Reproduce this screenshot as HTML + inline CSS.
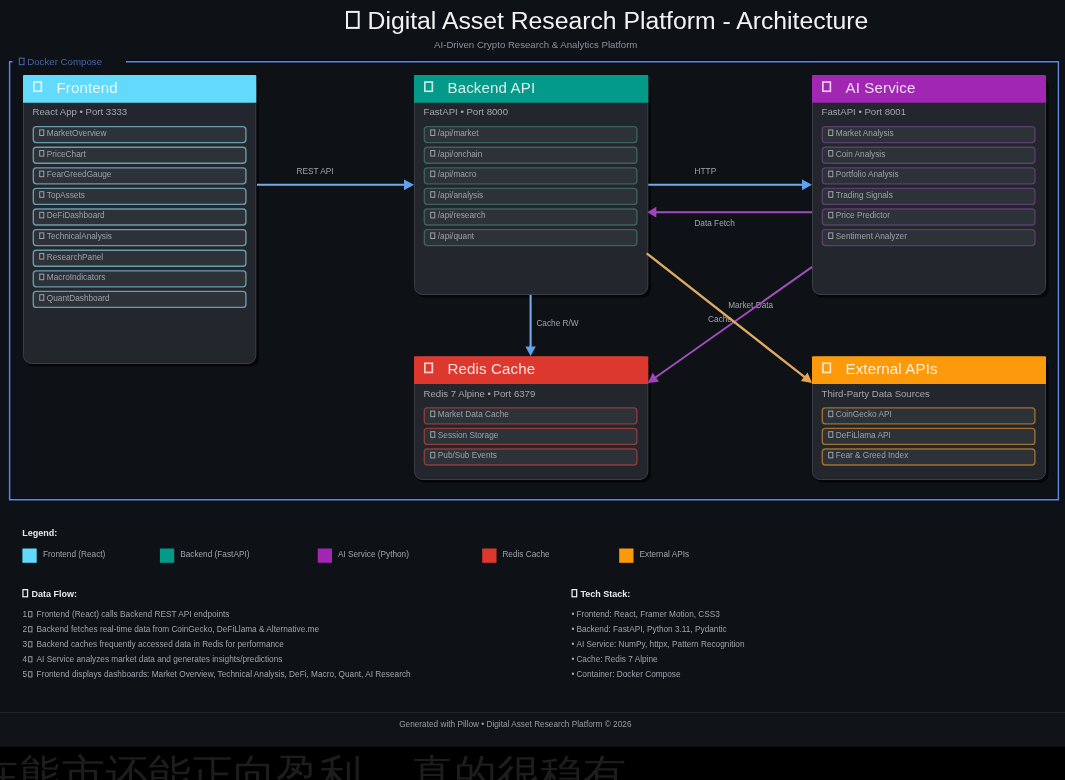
<!DOCTYPE html>
<html><head><meta charset="utf-8"><title>Digital Asset Research Platform - Architecture</title>
<style>
html,body{margin:0;padding:0;background:#0e1116;overflow:hidden;}
body{width:1065px;height:780px;position:relative;font-family:"Liberation Sans", sans-serif;}
svg{position:absolute;left:0;top:0;display:block;font-family:"Liberation Sans", sans-serif;will-change:transform;}
.sub{position:absolute;left:-24.3px;top:753.6px;white-space:nowrap;font-size:43.3px;line-height:1;color:#1d1d1d;font-weight:500;letter-spacing:-0.1px;will-change:transform;}
</style></head>
<body>
<svg width="1065" height="780" viewBox="0 0 1065 780">
<rect x="0" y="0" width="1065" height="780" fill="#0e1116"/>
<rect x="347.00" y="11.90" width="11.70" height="16.00" fill="none" stroke="#f2f2f2" stroke-width="2.0"/>
<text x="367.6" y="29" font-size="24.75" fill="#f2f2f2">Digital Asset Research Platform - Architecture</text>
<text x="434.1" y="48.2" font-size="9.65" fill="#8b9099">AI-Driven Crypto Research &amp; Analytics Platform</text>
<path d="M 12.5 61.8 L 9.6 61.8 L 9.6 499.8 L 1058.4 499.8 L 1058.4 61.8 L 126 61.8" fill="none" stroke="#050c22" stroke-width="3.6"/>
<path d="M 12.5 61.8 L 9.6 61.8 L 9.6 499.8 L 1058.4 499.8 L 1058.4 61.8 L 126 61.8" fill="none" stroke="#5f8ad2" stroke-width="1.5"/>
<rect x="19.35" y="58.15" width="4.70" height="6.50" fill="none" stroke="#4166aa" stroke-width="1.1"/>
<text x="27.2" y="64.8" font-size="9.7" fill="#4166aa">Docker Compose</text>
<rect x="25.5" y="77.5" width="233.3" height="289" rx="8" fill="#050608"/>
<rect x="23.5" y="75.5" width="232.3" height="288" rx="8" fill="#23262d" stroke="#3b3e45" stroke-width="1"/>
<path d="M 23 102.7 L 23 76 Q 23 75 24 75 L 255.3 75 Q 256.3 75 256.3 76 L 256.3 102.7 Z" fill="#61dafb"/>
<rect x="33.85" y="82.05" width="7.50" height="9.20" fill="none" stroke="#d9f6fe" stroke-width="1.7"/>
<text x="56.5" y="93" font-size="15.1" fill="#e6f9fe" letter-spacing="0.12">Frontend</text>
<text x="32.6" y="115.3" font-size="9.6" fill="#a3a7ae">React App • Port 3333</text>
<rect x="33.3" y="126.60" width="212.6" height="16" rx="3" fill="#2d3138" stroke="#6a9cab" stroke-width="1.35"/>
<rect x="39.70" y="129.90" width="4.10" height="5.60" fill="none" stroke="#9ea2a9" stroke-width="1.0"/>
<text x="46.8" y="135.9" font-size="8.25" fill="#9ea2a9">MarketOverview</text>
<rect x="33.3" y="147.20" width="212.6" height="16" rx="3" fill="#2d3138" stroke="#6a9cab" stroke-width="1.35"/>
<rect x="39.70" y="150.50" width="4.10" height="5.60" fill="none" stroke="#9ea2a9" stroke-width="1.0"/>
<text x="46.8" y="156.5" font-size="8.25" fill="#9ea2a9">PriceChart</text>
<rect x="33.3" y="167.80" width="212.6" height="16" rx="3" fill="#2d3138" stroke="#6a9cab" stroke-width="1.35"/>
<rect x="39.70" y="171.10" width="4.10" height="5.60" fill="none" stroke="#9ea2a9" stroke-width="1.0"/>
<text x="46.8" y="177.1" font-size="8.25" fill="#9ea2a9">FearGreedGauge</text>
<rect x="33.3" y="188.40" width="212.6" height="16" rx="3" fill="#2d3138" stroke="#6a9cab" stroke-width="1.35"/>
<rect x="39.70" y="191.70" width="4.10" height="5.60" fill="none" stroke="#9ea2a9" stroke-width="1.0"/>
<text x="46.8" y="197.7" font-size="8.25" fill="#9ea2a9">TopAssets</text>
<rect x="33.3" y="209.00" width="212.6" height="16" rx="3" fill="#2d3138" stroke="#6a9cab" stroke-width="1.35"/>
<rect x="39.70" y="212.30" width="4.10" height="5.60" fill="none" stroke="#9ea2a9" stroke-width="1.0"/>
<text x="46.8" y="218.29999999999998" font-size="8.25" fill="#9ea2a9">DeFiDashboard</text>
<rect x="33.3" y="229.60" width="212.6" height="16" rx="3" fill="#2d3138" stroke="#6a9cab" stroke-width="1.35"/>
<rect x="39.70" y="232.90" width="4.10" height="5.60" fill="none" stroke="#9ea2a9" stroke-width="1.0"/>
<text x="46.8" y="238.89999999999998" font-size="8.25" fill="#9ea2a9">TechnicalAnalysis</text>
<rect x="33.3" y="250.20" width="212.6" height="16" rx="3" fill="#2d3138" stroke="#6a9cab" stroke-width="1.35"/>
<rect x="39.70" y="253.50" width="4.10" height="5.60" fill="none" stroke="#9ea2a9" stroke-width="1.0"/>
<text x="46.8" y="259.49999999999994" font-size="8.25" fill="#9ea2a9">ResearchPanel</text>
<rect x="33.3" y="270.80" width="212.6" height="16" rx="3" fill="#2d3138" stroke="#6a9cab" stroke-width="1.35"/>
<rect x="39.70" y="274.10" width="4.10" height="5.60" fill="none" stroke="#9ea2a9" stroke-width="1.0"/>
<text x="46.8" y="280.09999999999997" font-size="8.25" fill="#9ea2a9">MacroIndicators</text>
<rect x="33.3" y="291.40" width="212.6" height="16" rx="3" fill="#2d3138" stroke="#6a9cab" stroke-width="1.35"/>
<rect x="39.70" y="294.70" width="4.10" height="5.60" fill="none" stroke="#9ea2a9" stroke-width="1.0"/>
<text x="46.8" y="300.7" font-size="8.25" fill="#9ea2a9">QuantDashboard</text>
<rect x="416.5" y="77.5" width="234.29999999999995" height="220" rx="8" fill="#050608"/>
<rect x="414.5" y="75.5" width="233.29999999999995" height="219" rx="8" fill="#23262d" stroke="#3b3e45" stroke-width="1"/>
<path d="M 414 102.7 L 414 76 Q 414 75 415 75 L 647.3 75 Q 648.3 75 648.3 76 L 648.3 102.7 Z" fill="#049a89"/>
<rect x="424.85" y="82.05" width="7.50" height="9.20" fill="none" stroke="#c3e7e3" stroke-width="1.7"/>
<text x="447.5" y="93" font-size="15.1" fill="#d7efec" letter-spacing="0.12">Backend API</text>
<text x="423.6" y="115.3" font-size="9.6" fill="#a3a7ae">FastAPI • Port 8000</text>
<rect x="424.3" y="126.60" width="212.6" height="16" rx="3" fill="#2d3138" stroke="#3c625f" stroke-width="1.35"/>
<rect x="430.70" y="129.90" width="4.10" height="5.60" fill="none" stroke="#9ea2a9" stroke-width="1.0"/>
<text x="437.8" y="135.9" font-size="8.25" fill="#9ea2a9">/api/market</text>
<rect x="424.3" y="147.20" width="212.6" height="16" rx="3" fill="#2d3138" stroke="#3c625f" stroke-width="1.35"/>
<rect x="430.70" y="150.50" width="4.10" height="5.60" fill="none" stroke="#9ea2a9" stroke-width="1.0"/>
<text x="437.8" y="156.5" font-size="8.25" fill="#9ea2a9">/api/onchain</text>
<rect x="424.3" y="167.80" width="212.6" height="16" rx="3" fill="#2d3138" stroke="#3c625f" stroke-width="1.35"/>
<rect x="430.70" y="171.10" width="4.10" height="5.60" fill="none" stroke="#9ea2a9" stroke-width="1.0"/>
<text x="437.8" y="177.1" font-size="8.25" fill="#9ea2a9">/api/macro</text>
<rect x="424.3" y="188.40" width="212.6" height="16" rx="3" fill="#2d3138" stroke="#3c625f" stroke-width="1.35"/>
<rect x="430.70" y="191.70" width="4.10" height="5.60" fill="none" stroke="#9ea2a9" stroke-width="1.0"/>
<text x="437.8" y="197.7" font-size="8.25" fill="#9ea2a9">/api/analysis</text>
<rect x="424.3" y="209.00" width="212.6" height="16" rx="3" fill="#2d3138" stroke="#3c625f" stroke-width="1.35"/>
<rect x="430.70" y="212.30" width="4.10" height="5.60" fill="none" stroke="#9ea2a9" stroke-width="1.0"/>
<text x="437.8" y="218.29999999999998" font-size="8.25" fill="#9ea2a9">/api/research</text>
<rect x="424.3" y="229.60" width="212.6" height="16" rx="3" fill="#2d3138" stroke="#3c625f" stroke-width="1.35"/>
<rect x="430.70" y="232.90" width="4.10" height="5.60" fill="none" stroke="#9ea2a9" stroke-width="1.0"/>
<text x="437.8" y="238.89999999999998" font-size="8.25" fill="#9ea2a9">/api/quant</text>
<rect x="814.5" y="77.5" width="234" height="220" rx="8" fill="#050608"/>
<rect x="812.5" y="75.5" width="233" height="219" rx="8" fill="#23262d" stroke="#3b3e45" stroke-width="1"/>
<path d="M 812 102.7 L 812 76 Q 812 75 813 75 L 1045 75 Q 1046 75 1046 76 L 1046 102.7 Z" fill="#a126b4"/>
<rect x="822.85" y="82.05" width="7.50" height="9.20" fill="none" stroke="#e8cbed" stroke-width="1.7"/>
<text x="845.5" y="93" font-size="15.1" fill="#f0dcf3" letter-spacing="0.12">AI Service</text>
<text x="821.6" y="115.3" font-size="9.6" fill="#a3a7ae">FastAPI • Port 8001</text>
<rect x="822.3" y="126.60" width="212.6" height="16" rx="3" fill="#2d3138" stroke="#58406c" stroke-width="1.35"/>
<rect x="828.70" y="129.90" width="4.10" height="5.60" fill="none" stroke="#9ea2a9" stroke-width="1.0"/>
<text x="835.8" y="135.9" font-size="8.25" fill="#9ea2a9">Market Analysis</text>
<rect x="822.3" y="147.20" width="212.6" height="16" rx="3" fill="#2d3138" stroke="#58406c" stroke-width="1.35"/>
<rect x="828.70" y="150.50" width="4.10" height="5.60" fill="none" stroke="#9ea2a9" stroke-width="1.0"/>
<text x="835.8" y="156.5" font-size="8.25" fill="#9ea2a9">Coin Analysis</text>
<rect x="822.3" y="167.80" width="212.6" height="16" rx="3" fill="#2d3138" stroke="#58406c" stroke-width="1.35"/>
<rect x="828.70" y="171.10" width="4.10" height="5.60" fill="none" stroke="#9ea2a9" stroke-width="1.0"/>
<text x="835.8" y="177.1" font-size="8.25" fill="#9ea2a9">Portfolio Analysis</text>
<rect x="822.3" y="188.40" width="212.6" height="16" rx="3" fill="#2d3138" stroke="#58406c" stroke-width="1.35"/>
<rect x="828.70" y="191.70" width="4.10" height="5.60" fill="none" stroke="#9ea2a9" stroke-width="1.0"/>
<text x="835.8" y="197.7" font-size="8.25" fill="#9ea2a9">Trading Signals</text>
<rect x="822.3" y="209.00" width="212.6" height="16" rx="3" fill="#2d3138" stroke="#58406c" stroke-width="1.35"/>
<rect x="828.70" y="212.30" width="4.10" height="5.60" fill="none" stroke="#9ea2a9" stroke-width="1.0"/>
<text x="835.8" y="218.29999999999998" font-size="8.25" fill="#9ea2a9">Price Predictor</text>
<rect x="822.3" y="229.60" width="212.6" height="16" rx="3" fill="#2d3138" stroke="#58406c" stroke-width="1.35"/>
<rect x="828.70" y="232.90" width="4.10" height="5.60" fill="none" stroke="#9ea2a9" stroke-width="1.0"/>
<text x="835.8" y="238.89999999999998" font-size="8.25" fill="#9ea2a9">Sentiment Analyzer</text>
<rect x="416.5" y="358.7" width="234.29999999999995" height="123.80000000000001" rx="8" fill="#050608"/>
<rect x="414.5" y="356.7" width="233.29999999999995" height="122.80000000000001" rx="8" fill="#23262d" stroke="#3b3e45" stroke-width="1"/>
<path d="M 414 383.9 L 414 357.2 Q 414 356.2 415 356.2 L 647.3 356.2 Q 648.3 356.2 648.3 357.2 L 648.3 383.9 Z" fill="#dd382e"/>
<rect x="424.85" y="363.25" width="7.50" height="9.20" fill="none" stroke="#f7cfcd" stroke-width="1.7"/>
<text x="447.5" y="374.2" font-size="15.1" fill="#fadfde" letter-spacing="0.12">Redis Cache</text>
<text x="423.6" y="396.5" font-size="9.6" fill="#a3a7ae">Redis 7 Alpine • Port 6379</text>
<rect x="424.3" y="407.80" width="212.6" height="16" rx="3" fill="#2d3138" stroke="#8e3c38" stroke-width="1.35"/>
<rect x="430.70" y="411.10" width="4.10" height="5.60" fill="none" stroke="#9ea2a9" stroke-width="1.0"/>
<text x="437.8" y="417.1" font-size="8.25" fill="#9ea2a9">Market Data Cache</text>
<rect x="424.3" y="428.40" width="212.6" height="16" rx="3" fill="#2d3138" stroke="#8e3c38" stroke-width="1.35"/>
<rect x="430.70" y="431.70" width="4.10" height="5.60" fill="none" stroke="#9ea2a9" stroke-width="1.0"/>
<text x="437.8" y="437.70000000000005" font-size="8.25" fill="#9ea2a9">Session Storage</text>
<rect x="424.3" y="449.00" width="212.6" height="16" rx="3" fill="#2d3138" stroke="#8e3c38" stroke-width="1.35"/>
<rect x="430.70" y="452.30" width="4.10" height="5.60" fill="none" stroke="#9ea2a9" stroke-width="1.0"/>
<text x="437.8" y="458.30000000000007" font-size="8.25" fill="#9ea2a9">Pub/Sub Events</text>
<rect x="814.5" y="358.7" width="234" height="123.80000000000001" rx="8" fill="#050608"/>
<rect x="812.5" y="356.7" width="233" height="122.80000000000001" rx="8" fill="#23262d" stroke="#3b3e45" stroke-width="1"/>
<path d="M 812 383.9 L 812 357.2 Q 812 356.2 813 356.2 L 1045 356.2 Q 1046 356.2 1046 357.2 L 1046 383.9 Z" fill="#fd9a0c"/>
<rect x="822.85" y="363.25" width="7.50" height="9.20" fill="none" stroke="#ffe7c5" stroke-width="1.7"/>
<text x="845.5" y="374.2" font-size="15.1" fill="#ffefd8" letter-spacing="0.12">External APIs</text>
<text x="821.6" y="396.5" font-size="9.6" fill="#a3a7ae">Third-Party Data Sources</text>
<rect x="822.3" y="407.80" width="212.6" height="16" rx="3" fill="#2d3138" stroke="#a07030" stroke-width="1.35"/>
<rect x="828.70" y="411.10" width="4.10" height="5.60" fill="none" stroke="#9ea2a9" stroke-width="1.0"/>
<text x="835.8" y="417.1" font-size="8.25" fill="#9ea2a9">CoinGecko API</text>
<rect x="822.3" y="428.40" width="212.6" height="16" rx="3" fill="#2d3138" stroke="#a07030" stroke-width="1.35"/>
<rect x="828.70" y="431.70" width="4.10" height="5.60" fill="none" stroke="#9ea2a9" stroke-width="1.0"/>
<text x="835.8" y="437.70000000000005" font-size="8.25" fill="#9ea2a9">DeFiLlama API</text>
<rect x="822.3" y="449.00" width="212.6" height="16" rx="3" fill="#2d3138" stroke="#a07030" stroke-width="1.35"/>
<rect x="828.70" y="452.30" width="4.10" height="5.60" fill="none" stroke="#9ea2a9" stroke-width="1.0"/>
<text x="835.8" y="458.30000000000007" font-size="8.25" fill="#9ea2a9">Fear &amp; Greed Index</text>
<text x="296.6" y="174.4" font-size="8.25" fill="#a0a4ab">REST API</text>
<text x="694.6" y="174.1" font-size="8.25" fill="#a0a4ab">HTTP</text>
<text x="694.4" y="225.8" font-size="8.25" fill="#a0a4ab">Data Fetch</text>
<text x="536.4" y="325.6" font-size="8.25" fill="#a0a4ab">Cache R/W</text>
<text x="728.2" y="308.3" font-size="8.25" fill="#a0a4ab">Market Data</text>
<text x="708.1" y="322.3" font-size="8.25" fill="#a0a4ab">Cache</text>
<line x1="257.00" y1="184.80" x2="405.00" y2="184.80" stroke="#74abe6" stroke-width="2.1"/>
<polygon points="414.00,184.80 404.00,190.20 404.00,179.40" fill="#5fa2ee"/>
<line x1="648.30" y1="184.80" x2="803.00" y2="184.80" stroke="#74abe6" stroke-width="2.1"/>
<polygon points="812.00,184.80 802.00,190.20 802.00,179.40" fill="#5fa2ee"/>
<line x1="812.00" y1="212.20" x2="655.30" y2="212.20" stroke="#a24ebd" stroke-width="2.1"/>
<polygon points="647.30,212.20 656.30,206.80 656.30,217.60" fill="#a242bd"/>
<line x1="530.60" y1="295.00" x2="530.60" y2="347.40" stroke="#74abe6" stroke-width="2.1"/>
<polygon points="530.60,356.00 525.40,346.40 535.80,346.40" fill="#5fa2ee"/>
<line x1="812.10" y1="266.90" x2="655.05" y2="377.81" stroke="#a24ebd" stroke-width="1.9"/>
<polygon points="647.70,383.00 652.75,372.82 658.98,381.64" fill="#a242bd"/>
<line x1="646.70" y1="253.30" x2="805.02" y2="377.45" stroke="#e2ab62" stroke-width="2.3"/>
<polygon points="812.10,383.00 800.90,381.08 807.56,372.58" fill="#e9a548"/>
<text x="22.2" y="535.7" font-size="9" fill="#e6e8eb" font-weight="700">Legend:</text>
<rect x="22.4" y="548.5" width="14.3" height="14.3" fill="#61dafb"/>
<text x="43.0" y="556.7" font-size="8.25" fill="#a0a4ab">Frontend (React)</text>
<rect x="159.9" y="548.5" width="14.3" height="14.3" fill="#049a89"/>
<text x="180.2" y="556.7" font-size="8.25" fill="#a0a4ab">Backend (FastAPI)</text>
<rect x="317.7" y="548.5" width="14.3" height="14.3" fill="#a126b4"/>
<text x="337.9" y="556.7" font-size="8.25" fill="#a0a4ab">AI Service (Python)</text>
<rect x="482.2" y="548.5" width="14.3" height="14.3" fill="#dd382e"/>
<text x="502.4" y="556.7" font-size="8.25" fill="#a0a4ab">Redis Cache</text>
<rect x="619.2" y="548.5" width="14.3" height="14.3" fill="#fd9a0c"/>
<text x="639.6" y="556.7" font-size="8.25" fill="#a0a4ab">External APIs</text>
<rect x="22.95" y="589.65" width="4.60" height="7.10" fill="none" stroke="#e6e8eb" stroke-width="1.3"/>
<text x="31.6" y="597.1" font-size="9" fill="#e6e8eb" font-weight="700">Data Flow:</text>
<text x="22.4" y="617.2" font-size="8.25" fill="#a0a4ab">1</text>
<rect x="28.65" y="611.65" width="3.30" height="5.20" fill="none" stroke="#a0a4ab" stroke-width="0.9"/>
<text x="36.6" y="617.2" font-size="8.25" fill="#a0a4ab">Frontend (React) calls Backend REST API endpoints</text>
<text x="22.4" y="632.22" font-size="8.25" fill="#a0a4ab">2</text>
<rect x="28.65" y="626.67" width="3.30" height="5.20" fill="none" stroke="#a0a4ab" stroke-width="0.9"/>
<text x="36.6" y="632.22" font-size="8.25" fill="#a0a4ab">Backend fetches real-time data from CoinGecko, DeFiLlama &amp; Alternative.me</text>
<text x="22.4" y="647.24" font-size="8.25" fill="#a0a4ab">3</text>
<rect x="28.65" y="641.69" width="3.30" height="5.20" fill="none" stroke="#a0a4ab" stroke-width="0.9"/>
<text x="36.6" y="647.24" font-size="8.25" fill="#a0a4ab">Backend caches frequently accessed data in Redis for performance</text>
<text x="22.4" y="662.26" font-size="8.25" fill="#a0a4ab">4</text>
<rect x="28.65" y="656.71" width="3.30" height="5.20" fill="none" stroke="#a0a4ab" stroke-width="0.9"/>
<text x="36.6" y="662.26" font-size="8.25" fill="#a0a4ab">AI Service analyzes market data and generates insights/predictions</text>
<text x="22.4" y="677.2800000000001" font-size="8.25" fill="#a0a4ab">5</text>
<rect x="28.65" y="671.73" width="3.30" height="5.20" fill="none" stroke="#a0a4ab" stroke-width="0.9"/>
<text x="36.6" y="677.2800000000001" font-size="8.25" fill="#a0a4ab">Frontend displays dashboards: Market Overview, Technical Analysis, DeFi, Macro, Quant, AI Research</text>
<rect x="572.05" y="589.65" width="4.60" height="7.10" fill="none" stroke="#e6e8eb" stroke-width="1.3"/>
<text x="580.4" y="597.1" font-size="9" fill="#e6e8eb" font-weight="700">Tech Stack:</text>
<text x="571.6" y="617.2" font-size="8.25" fill="#a0a4ab">•</text>
<text x="576.4" y="617.2" font-size="8.25" fill="#a0a4ab">Frontend: React, Framer Motion, CSS3</text>
<text x="571.6" y="632.22" font-size="8.25" fill="#a0a4ab">•</text>
<text x="576.4" y="632.22" font-size="8.25" fill="#a0a4ab">Backend: FastAPI, Python 3.11, Pydantic</text>
<text x="571.6" y="647.24" font-size="8.25" fill="#a0a4ab">•</text>
<text x="576.4" y="647.24" font-size="8.25" fill="#a0a4ab">AI Service: NumPy, httpx, Pattern Recognition</text>
<text x="571.6" y="662.26" font-size="8.25" fill="#a0a4ab">•</text>
<text x="576.4" y="662.26" font-size="8.25" fill="#a0a4ab">Cache: Redis 7 Alpine</text>
<text x="571.6" y="677.2800000000001" font-size="8.25" fill="#a0a4ab">•</text>
<text x="576.4" y="677.2800000000001" font-size="8.25" fill="#a0a4ab">Container: Docker Compose</text>
<rect x="0" y="712.4" width="1065" height="34.4" fill="#101318"/>
<rect x="0" y="711.9" width="1065" height="1" fill="#23272e"/>
<text x="399.2" y="726.8" font-size="8.25" fill="#9a9ea5">Generated with Pillow • Digital Asset Research Platform © 2026</text>
<rect x="0" y="746.8" width="1065" height="33.2" fill="#000000"/>
</svg>
<div class="sub">在熊市还能正向盈利，<span style="margin-left:6px">真的很稳有</span></div>
</body></html>
